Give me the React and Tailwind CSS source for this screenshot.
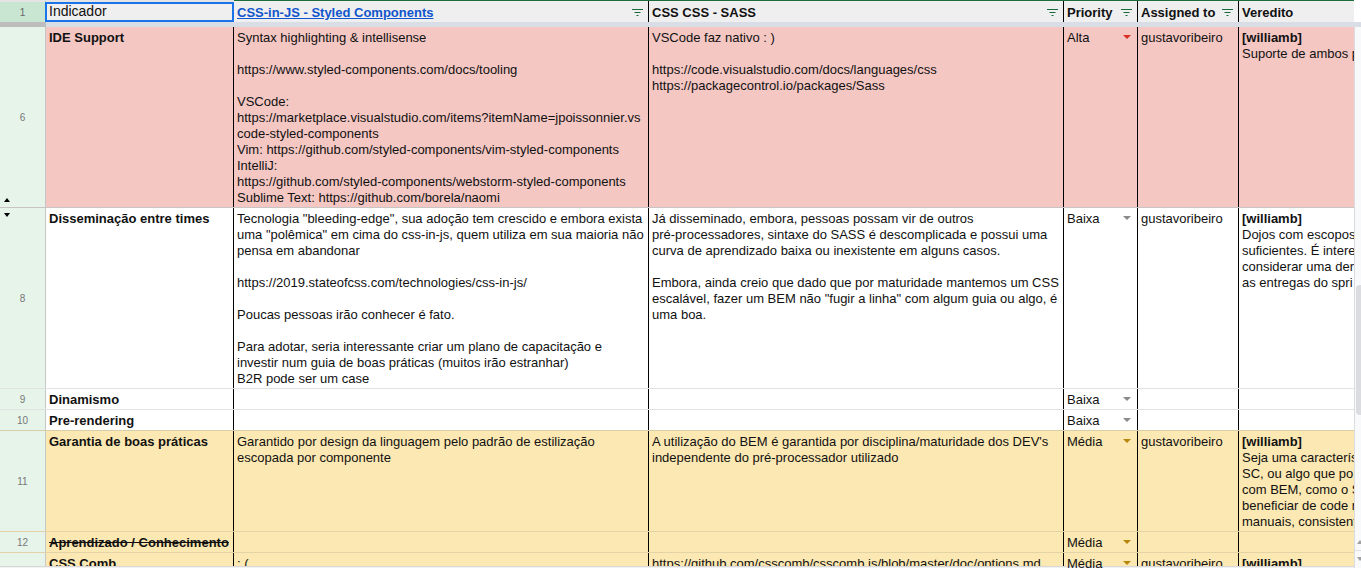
import React from 'react';

// --- Icono de filtro de la cabecera ---
const FilterIcon = () => (
  <svg width="11" height="7" viewBox="0 0 11 7" className="shrink-0">
    <path d="M0 .5h11M2.5 3.5h6M4.5 6.5h2" stroke="#176b3a" strokeWidth="1" fill="none" />
  </svg>
);

const HeaderCell = ({ className, children, filter, link }) => (
  <div className={`flex items-center justify-between shrink-0 h-full pl-[3px] pr-[5px] pt-[2px] border-r border-black font-bold text-[13px] ${className}`}>
    <span className={link ? 'text-[#1155cc] underline' : 'text-[#111]'}>{children}</span>
    {filter && <FilterIcon />}
  </div>
);

const Cell = ({ className = '', children }) => (
  <div className={`shrink-0 h-full overflow-hidden px-[3px] pt-[3px] leading-[16px] whitespace-pre text-[13px] text-[#111] ${className}`}>{children}</div>
);

const Row = ({ num, height, bg, line, cells, priority, arrow, assigned, verdict, strike, arrowUp, arrowDown, last }) => (
  <div className={`flex shrink-0 ${height} ${last ? '' : `border-b ${line}`}`}>
    <div className="relative shrink-0 w-[46px] h-full flex items-center justify-center border-r border-[#c4c7c5] bg-[#e7f4ea] text-[10px] text-[#777] font-medium">
      {num}
      {arrowUp && <span className="absolute left-[4px] bottom-[5px] w-0 h-0 border-x-[3.5px] border-x-transparent border-b-[4px] border-b-black" />}
      {arrowDown && <span className="absolute left-[4px] top-[5px] w-0 h-0 border-x-[3.5px] border-x-transparent border-t-[4px] border-t-black" />}
    </div>
    <div className={`flex flex-1 min-w-0 ${bg}`}>
      <Cell className={`w-[188px] font-bold border-r border-black ${strike ? 'line-through' : ''}`}>{cells[0]}</Cell>
      <Cell className="w-[415px] border-r border-black">{cells[1]}</Cell>
      <Cell className="w-[415px] border-r border-black">{cells[2]}</Cell>
      <div className="relative shrink-0 w-[74px] h-full border-r border-black px-[3px] pt-[3px] leading-[16px] text-[13px] text-[#111]">
        {priority}
        {arrow && <span className={`absolute right-[6px] top-[8px] w-0 h-0 border-x-[4px] border-x-transparent border-t-[4px] ${arrow}`} />}
      </div>
      <Cell className="w-[101px] border-r border-black">{assigned}</Cell>
      <Cell className="flex-1 min-w-0">{verdict}</Cell>
    </div>
  </div>
);

const wb = <b className="font-bold">[williamb]</b>;

export default function App() {
  return (
    <div className="flex w-[1361px] h-[568px] overflow-hidden bg-white font-['Liberation_Sans',Arial,sans-serif]">
      <div className="flex flex-col flex-1 min-w-0">
        {/* Cabecera congelada */}
        <div className="flex shrink-0 h-[22px] bg-[#efefef]">
          <div className="shrink-0 w-[46px] h-full flex items-center justify-center bg-[#c9e6d2] border-t-2 border-t-[#e4e4e4] border-r border-r-[#b5c9bb] text-[10px] text-[#666]">1</div>
          <div className="shrink-0 w-[188px] h-full border-t-2 border-t-[#e4e4e4]">
            <div className="h-full flex items-center pl-[2px] pb-[2px] -ml-[1px] border-2 border-[#1a73e8] text-[14px] text-[#111]">Indicador</div>
          </div>
          <div className="flex flex-1 min-w-0 h-full border-t border-[#1e6b3c]">
            <HeaderCell className="w-[415px]" filter link>CSS-in-JS - Styled Components</HeaderCell>
            <HeaderCell className="w-[415px]" filter>CSS CSS - SASS</HeaderCell>
            <HeaderCell className="w-[74px]" filter>Priority</HeaderCell>
            <HeaderCell className="w-[101px]" filter>Assigned to</HeaderCell>
            <HeaderCell className="flex-1 min-w-0 border-r-0">Veredito</HeaderCell>
          </div>
        </div>
        <div className="flex shrink-0 h-[5px]">
          <div className="shrink-0 w-[46px] bg-[#bdbdbd]" />
          <div className="flex-1 bg-[#d9dde6]" />
        </div>

        <Row num="6" height="h-[181px]" bg="bg-[#f4c7c3]" line="border-[#c9c5c4]" priority="Alta" arrow="border-t-[#d93025]" assigned="gustavoribeiro" arrowUp
          cells={[
            'IDE Support',
            `Syntax highlighting & intellisense

https://www.styled-components.com/docs/tooling

VSCode:
https://marketplace.visualstudio.com/items?itemName=jpoissonnier.vs
code-styled-components
Vim: https://github.com/styled-components/vim-styled-components
IntelliJ:
https://github.com/styled-components/webstorm-styled-components
Sublime Text: https://github.com/borela/naomi`,
            `VSCode faz nativo : )

https://code.visualstudio.com/docs/languages/css
https://packagecontrol.io/packages/Sass`,
          ]}
          verdict={<>{wb}{'\nSuporte de ambos p'}</>}
        />
        <Row num="8" height="h-[181px]" bg="bg-white" line="border-[#e2e2e2]" priority="Baixa" arrow="border-t-[#8a8a8a]" assigned="gustavoribeiro" arrowDown
          cells={[
            'Disseminação entre times',
            `Tecnologia "bleeding-edge", sua adoção tem crescido e embora exista
uma "polêmica" em cima do css-in-js, quem utiliza em sua maioria não
pensa em abandonar

https://2019.stateofcss.com/technologies/css-in-js/

Poucas pessoas irão conhecer é fato.

Para adotar, seria interessante criar um plano de capacitação e
investir num guia de boas práticas (muitos irão estranhar)
B2R pode ser um case`,
            `Já disseminado, embora, pessoas possam vir de outros
pré-processadores, sintaxe do SASS é descomplicada e possui uma
curva de aprendizado baixa ou inexistente em alguns casos.

Embora, ainda creio que dado que por maturidade mantemos um CSS
escalável, fazer um BEM não "fugir a linha" com algum guia ou algo, é
uma boa.`,
          ]}
          verdict={<>{wb}{'\nDojos com escopos\nsuficientes. É intere\nconsiderar uma der\nas entregas do spri'}</>}
        />
        <Row num="9" height="h-[21px]" bg="bg-white" line="border-[#e2e2e2]" priority="Baixa" arrow="border-t-[#8a8a8a]" cells={['Dinamismo', '', '']} />
        <Row num="10" height="h-[21px]" bg="bg-white" line="border-[#d8cfa8]" priority="Baixa" arrow="border-t-[#8a8a8a]" cells={['Pre-rendering', '', '']} />
        <Row num="11" height="h-[101px]" bg="bg-[#fce8b2]" line="border-[#e3d3a6]" priority="Média" arrow="border-t-[#b8860b]" assigned="gustavoribeiro"
          cells={[
            'Garantia de boas práticas',
            `Garantido por design da linguagem pelo padrão de estilização
escopada por componente`,
            `A utilização do BEM é garantida por disciplina/maturidade dos DEV's
independente do pré-processador utilizado`,
          ]}
          verdict={<>{wb}{'\nSeja uma caracterís\nSC, ou algo que po\ncom BEM, como o S\nbeneficiar de code r\nmanuais, consistent'}</>}
        />
        <Row num="12" height="h-[21px]" bg="bg-[#fce8b2]" line="border-[#e3d3a6]" priority="Média" arrow="border-t-[#b8860b]" strike cells={['Aprendizado / Conhecimento', '', '']} />
        <Row num="" height="h-[13px]" bg="bg-[#fce8b2]" line="border-[#e3d3a6]" priority="Média" arrow="border-t-[#b8860b]" assigned="gustavoribeiro" last
          cells={['CSS Comb', ': (', 'https://github.com/csscomb/csscomb.js/blob/master/doc/options.md']}
          verdict={wb}
        />
        <div className="flex-1 bg-[#f1f1f1] border-t border-[#d8d8d8]" />
      </div>
      {/* Barra de scroll */}
      <div className="relative flex flex-col shrink-0 w-[7px] bg-white">
        <div className="h-[22px] shrink-0" />
        <div className="h-[5px] shrink-0 bg-[#d9dde6]" />
        <div className="flex-1 bg-[#f8f9fa] border-l border-[#dadce0]" />
        <div className="absolute left-[2px] top-[285px] w-[5px] h-[130px] rounded-l-sm bg-[#dadce0]" />
        <div className="absolute left-[1px] top-[550px] w-[6px] h-px bg-[#e0e0e0]" />
        <span className="absolute left-[3px] top-[540px] w-0 h-0 border-x-[3px] border-x-transparent border-b-[4px] border-b-[#a0a0a0]" />
        <span className="absolute left-[3px] top-[557px] w-0 h-0 border-x-[3px] border-x-transparent border-t-[4px] border-t-[#a0a0a0]" />
      </div>
    </div>
  );
}
